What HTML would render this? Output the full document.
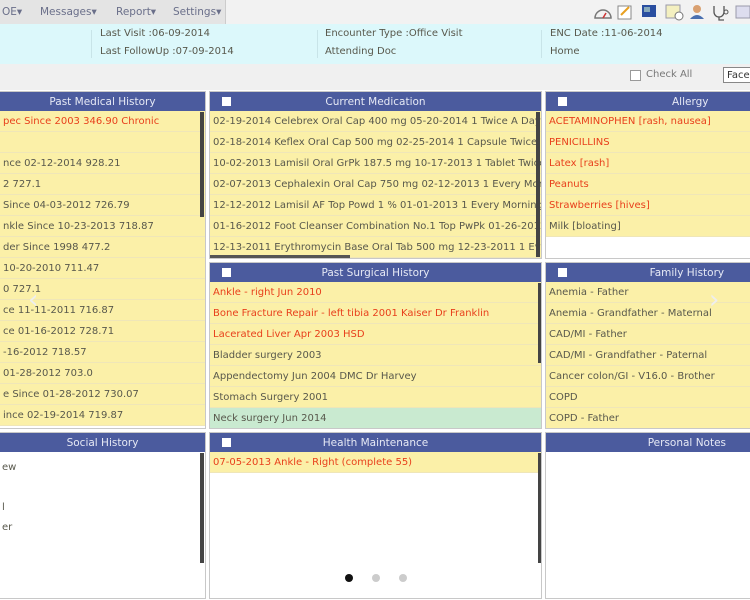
<!DOCTYPE html>
<html><head><style>
*{margin:0;padding:0;box-sizing:border-box}
body{width:750px;height:600px;overflow:hidden;background:#fff;font-family:"DejaVu Sans","Liberation Sans",sans-serif;font-size:10px;color:#58584c;position:relative}
.a{position:absolute}
.menu{left:0;top:0;width:750px;height:24px;background:#f2f2f2}
.mbar{left:0;top:0;width:226px;height:24px;background:#e4e4e4;border-right:1px solid #ccc}
.mi{top:6px;color:#6a6f8a;font-size:10.5px}
.info{left:0;top:24px;width:750px;height:40px;background:#dcf8fb}
.gray{left:0;top:64px;width:750px;height:26px;background:#f0f0f0}
.p{border:1px solid #c8c8c8;background:#fff;overflow:hidden}
.h{height:19px;background:#4b5b9e;color:#e6e9f5;font-size:10.5px;line-height:20px;text-align:center;position:relative;white-space:nowrap}
.cb{position:absolute;left:12px;top:5px;width:9px;height:9px;background:#fff}
.r{height:21px;line-height:22px;background:#fbf0a8;border-bottom:1px solid #efe6b8;padding-left:3px;white-space:nowrap;overflow:hidden}
.red{color:#e8401c}
.g{background:#c9ead0}
.sb{position:absolute;width:4px;background:#444}
.dot{top:574px;width:8px;height:8px;border-radius:50%;background:#ccc}
</style></head><body>
<div class="a menu"></div>
<div class="a mbar"></div>
<div class="a mi" style="left:2px">OE▾</div>
<div class="a mi" style="left:40px">Messages▾</div>
<div class="a mi" style="left:116px">Report▾</div>
<div class="a mi" style="left:173px">Settings▾</div>
<svg class="a" style="left:592px;top:2px" width="158" height="20">
<path d="M3 16a8 8 0 0 1 16 0z" fill="none" stroke="#777" stroke-width="1.5"/><path d="M11 16l3-5" stroke="#c33" stroke-width="1.5"/>
<rect x="26" y="4" width="13" height="13" fill="#fff" stroke="#888"/><path d="M29 13l8-8" stroke="#e8a020" stroke-width="2"/>
<rect x="50" y="3" width="14" height="12" fill="#2a4ea0"/><rect x="52" y="5" width="6" height="5" fill="#8ab"/>
<rect x="74" y="3" width="14" height="13" fill="#f4f0c0" stroke="#99a"/><circle cx="87" cy="14" r="4" fill="#fff" stroke="#777"/>
<circle cx="105" cy="7" r="4" fill="#d9a070"/><path d="M98 17q7-8 14 0z" fill="#4a70b0"/>
<path d="M122 4v6a5 5 0 0 0 10 0v-6M127 15v3h5" fill="none" stroke="#555" stroke-width="1.3"/><circle cx="134" cy="10" r="2" fill="none" stroke="#555"/>
<rect x="144" y="4" width="14" height="12" fill="#dde" stroke="#99a"/>
</svg>
<div class="a info"></div>
<div class="a" style="left:91px;top:30px;width:1px;height:28px;background:#c8e4e8"></div>
<div class="a" style="left:317px;top:30px;width:1px;height:28px;background:#c8e4e8"></div>
<div class="a" style="left:541px;top:30px;width:1px;height:28px;background:#c8e4e8"></div>
<div class="a" style="left:100px;top:28px">Last Visit :06-09-2014</div>
<div class="a" style="left:100px;top:46px">Last FollowUp :07-09-2014</div>
<div class="a" style="left:325px;top:28px">Encounter Type :Office Visit</div>
<div class="a" style="left:325px;top:46px">Attending Doc</div>
<div class="a" style="left:550px;top:28px">ENC Date :11-06-2014</div>
<div class="a" style="left:550px;top:46px">Home</div>
<div class="a gray"></div>
<div class="a" style="left:630px;top:70px;width:11px;height:11px;border:1px solid #999;background:#fff"></div>
<div class="a" style="left:646px;top:69px;color:#777">Check All</div>
<div class="a" style="left:723px;top:67px;width:30px;height:16px;border:1px solid #888;background:#fff;padding:2px 0 0 3px;color:#333">Face</div>

<div class="a p" style="left:-1px;top:91px;width:207px;height:338px">
<div class="h">Past Medical History</div>
<div class="r red">pec Since 2003 346.90 Chronic</div>
<div class="r">&nbsp;</div>
<div class="r">nce 02-12-2014 928.21</div>
<div class="r">2 727.1</div>
<div class="r">Since 04-03-2012 726.79</div>
<div class="r">nkle Since 10-23-2013 718.87</div>
<div class="r">der Since 1998 477.2</div>
<div class="r">10-20-2010 711.47</div>
<div class="r">0 727.1</div>
<div class="r">ce 11-11-2011 716.87</div>
<div class="r">ce 01-16-2012 728.71</div>
<div class="r">-16-2012 718.57</div>
<div class="r">01-28-2012 703.0</div>
<div class="r">e Since 01-28-2012 730.07</div>
<div class="r">ince 02-19-2014 719.87</div>
<div class="sb" style="left:200px;top:20px;height:105px"></div>
</div>

<div class="a p" style="left:209px;top:91px;width:333px;height:168px">
<div class="h"><span class="cb"></span>Current Medication</div>
<div class="r">02-19-2014 Celebrex Oral Cap 400 mg 05-20-2014 1 Twice A Day</div>
<div class="r">02-18-2014 Keflex Oral Cap 500 mg 02-25-2014 1 Capsule Twice</div>
<div class="r">10-02-2013 Lamisil Oral GrPk 187.5 mg 10-17-2013 1 Tablet Twice</div>
<div class="r">02-07-2013 Cephalexin Oral Cap 750 mg 02-12-2013 1 Every Morning</div>
<div class="r">12-12-2012 Lamisil AF Top Powd 1 % 01-01-2013 1 Every Morning</div>
<div class="r">01-16-2012 Foot Cleanser Combination No.1 Top PwPk 01-26-2012</div>
<div class="r">12-13-2011 Erythromycin Base Oral Tab 500 mg 12-23-2011 1 Every</div>
<div class="sb" style="left:326px;top:20px;height:145px"></div>
<div class="a" style="left:0;top:163px;width:140px;height:3px;background:#555"></div>
</div>

<div class="a p" style="left:545px;top:91px;width:207px;height:168px">
<div class="h"><span class="cb"></span>&nbsp;&nbsp;&nbsp;&nbsp;&nbsp;&nbsp;&nbsp;&nbsp;&nbsp;&nbsp;&nbsp;&nbsp;&nbsp;&nbsp;&nbsp;&nbsp;&nbsp;&nbsp;&nbsp;&nbsp;&nbsp;&nbsp;&nbsp;&nbsp;&nbsp;Allergy</div>
<div class="r red">ACETAMINOPHEN [rash, nausea]</div>
<div class="r red">PENICILLINS</div>
<div class="r red">Latex [rash]</div>
<div class="r red">Peanuts</div>
<div class="r red">Strawberries [hives]</div>
<div class="r">Milk [bloating]</div>
</div>

<div class="a p" style="left:209px;top:262px;width:333px;height:167px">
<div class="h"><span class="cb"></span>Past Surgical History</div>
<div class="r red">Ankle - right Jun 2010</div>
<div class="r red">Bone Fracture Repair - left tibia 2001 Kaiser Dr Franklin</div>
<div class="r red">Lacerated Liver Apr 2003 HSD</div>
<div class="r">Bladder surgery 2003</div>
<div class="r">Appendectomy Jun 2004 DMC Dr Harvey</div>
<div class="r">Stomach Surgery 2001</div>
<div class="r g">Neck surgery Jun 2014</div>
<div class="sb" style="left:328px;top:20px;height:80px"></div>
</div>

<div class="a p" style="left:545px;top:262px;width:207px;height:167px">
<div class="h"><span class="cb"></span>&nbsp;&nbsp;&nbsp;&nbsp;&nbsp;&nbsp;&nbsp;&nbsp;&nbsp;&nbsp;&nbsp;&nbsp;&nbsp;&nbsp;&nbsp;&nbsp;&nbsp;&nbsp;&nbsp;&nbsp;&nbsp;&nbsp;&nbsp;Family History</div>
<div class="r">Anemia - Father</div>
<div class="r">Anemia - Grandfather - Maternal</div>
<div class="r">CAD/MI - Father</div>
<div class="r">CAD/MI - Grandfather - Paternal</div>
<div class="r">Cancer colon/GI - V16.0 - Brother</div>
<div class="r">COPD</div>
<div class="r">COPD - Father</div>
</div>

<div class="a p" style="left:-1px;top:432px;width:207px;height:167px">
<div class="h">Social History</div>
<div style="padding:6px 2px;line-height:20px">ew<br>&nbsp;<br>l<br>er</div>
<div class="sb" style="left:200px;top:20px;height:110px"></div>
</div>
<div class="a p" style="left:209px;top:432px;width:333px;height:167px">
<div class="h"><span class="cb"></span>Health Maintenance</div>
<div class="r red">07-05-2013 Ankle - Right (complete 55)</div>
<div class="sb" style="left:328px;top:20px;height:110px"></div>
</div>
<div class="a p" style="left:545px;top:432px;width:207px;height:167px">
<div class="h">&nbsp;&nbsp;&nbsp;&nbsp;&nbsp;&nbsp;&nbsp;&nbsp;&nbsp;&nbsp;&nbsp;&nbsp;&nbsp;&nbsp;&nbsp;&nbsp;&nbsp;&nbsp;&nbsp;&nbsp;&nbsp;&nbsp;&nbsp;Personal Notes</div>
</div>

<div class="a" style="left:28px;top:285px;color:#eee;font-size:26px">‹</div>
<div class="a" style="left:709px;top:285px;color:#eee;font-size:26px">›</div>
<div class="a dot" style="left:345px;background:#111"></div>
<div class="a dot" style="left:372px"></div>
<div class="a dot" style="left:399px"></div>
</body></html>
